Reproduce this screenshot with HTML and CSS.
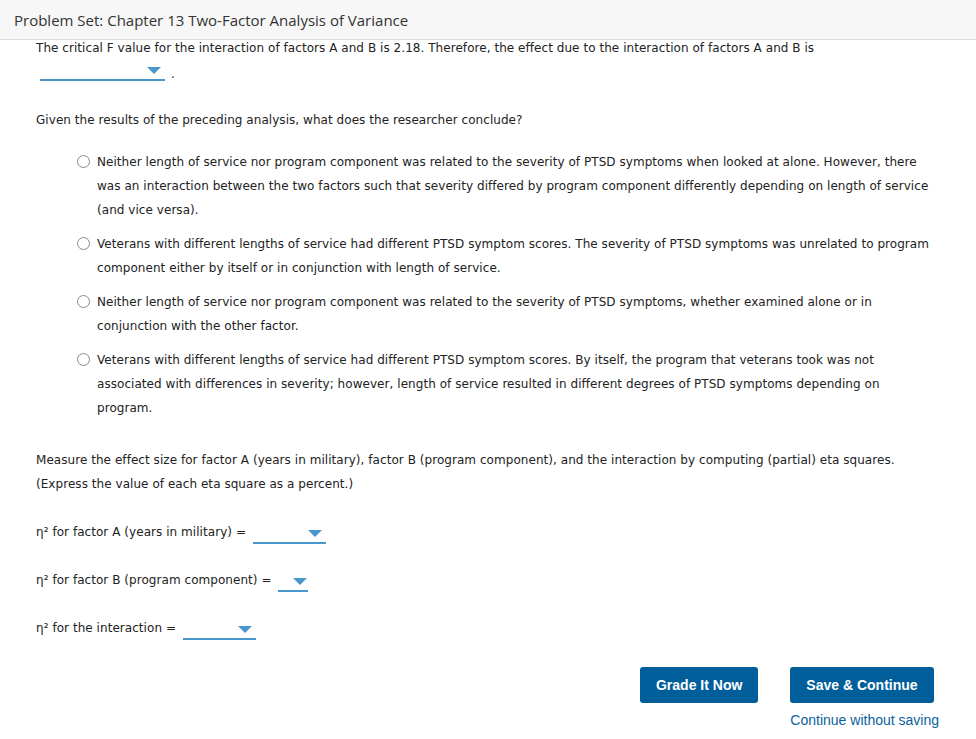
FILE: index.html
```html
<!DOCTYPE html>
<html lang="en">
<head>
  <meta charset="UTF-8" />
  <title>Problem Set: Chapter 13</title>
  <link rel="stylesheet" href="styles.css">
</head>
<body>

<div class="top-bar">
  <h1>Problem Set: Chapter 13 Two-Factor Analysis of Variance</h1>
</div>

<div class="content">
  <p class="line">The critical F value for the interaction of factors A and B is 2.18. Therefore, the effect due to the interaction of factors A and B is</p>
  <p class="drop-line"><span class="drop wide"></span> .</p>

  <p class="question">Given the results of the preceding analysis, what does the researcher conclude?</p>

  <div class="options">
    <label class="option">
      <span class="radio"></span>
      <span class="option-text">Neither length of service nor program component was related to the severity of PTSD symptoms when looked at alone. However, there was an interaction between the two factors such that severity differed by program component differently depending on length of service (and vice versa).</span>
    </label>
    <label class="option">
      <span class="radio"></span>
      <span class="option-text">Veterans with different lengths of service had different PTSD symptom scores. The severity of PTSD symptoms was unrelated to program component either by itself or in conjunction with length of service.</span>
    </label>
    <label class="option">
      <span class="radio"></span>
      <span class="option-text">Neither length of service nor program component was related to the severity of PTSD symptoms, whether examined alone or in conjunction with the other factor.</span>
    </label>
    <label class="option">
      <span class="radio"></span>
      <span class="option-text">Veterans with different lengths of service had different PTSD symptom scores. By itself, the program that veterans took was not associated with differences in severity; however, length of service resulted in different degrees of PTSD symptoms depending on program.</span>
    </label>
  </div>

  <p class="measure">Measure the effect size for factor A (years in military), factor B (program component), and the interaction by computing (partial) eta squares.<br>(Express the value of each eta square as a percent.)</p>

  <div class="eta-list">
    <div class="eta">η² for factor A (years in military) = <span class="drop mid"></span></div>
    <div class="eta">η² for factor B (program component) = <span class="drop small"></span></div>
    <div class="eta">η² for the interaction = <span class="drop mid"></span></div>
  </div>

  <div class="actions">
    <button class="btn">Grade It Now</button>
    <div class="save-col">
      <button class="btn">Save &amp; Continue</button>
      <a class="skip" href="#">Continue without saving</a>
    </div>
  </div>
</div>

</body>
</html>
```

FILE: styles.css
```css
body {
  margin: 0;
  font-family: 'DejaVu Sans', sans-serif;
  font-size: 12px;
  letter-spacing: 0.05px;
  color: #222;
  background: #fff;
}

.top-bar {
  height: 39px;
  background: #f7f7f7;
  border-bottom: 1px solid #dcdcdc;
  display: flex;
  align-items: center;
  padding: 0 14px;
}

.top-bar h1 {
  margin: 0;
  font-family: 'Open Sans', sans-serif;
  font-size: 15px;
  font-weight: 400;
  letter-spacing: 0;
  color: #333;
}

.content {
  padding: 0 36px;
}

.line {
  margin: 0;
  line-height: 16px;
}

.drop-line {
  margin: 3px 0 0 4px;
  height: 22px;
  display: flex;
  align-items: flex-end;
}

.drop {
  display: inline-block;
  position: relative;
  height: 20px;
  border-bottom: 2px solid #4a95cc;
  vertical-align: bottom;
}

.drop::after {
  content: "";
  position: absolute;
  right: 4px;
  top: 8px;
  border-left: 7px solid transparent;
  border-right: 7px solid transparent;
  border-top: 7px solid #4a95cc;
}

.drop.wide { width: 125px; margin-right: 6px; }
.drop.mid { width: 73px; }
.drop.small { width: 30px; }
.drop.small::after { right: 1px; }

.question {
  margin: 31px 0 0;
  line-height: 16px;
}

.options {
  margin-top: 22px;
  padding-left: 41px;
  padding-right: 8px;
  display: flex;
  flex-direction: column;
  gap: 10px;
}

.option {
  display: flex;
  gap: 7px;
  line-height: 24px;
}

.radio {
  flex-shrink: 0;
  width: 11px;
  height: 11px;
  margin-top: 5px;
  border: 1px solid #8a8a8a;
  border-radius: 50%;
  background: #fff;
}

.option-text {
  flex: 1;
}

.measure {
  margin: 28px 0 0;
  line-height: 24px;
}

.eta-list {
  margin-top: 25px;
  display: flex;
  flex-direction: column;
  gap: 26px;
}

.eta {
  height: 22px;
  display: flex;
  align-items: center;
  white-space: pre;
}

.eta .drop {
  margin-left: 3px;
  margin-top: 2px;
}

.actions {
  margin-top: 28px;
  display: flex;
  justify-content: flex-end;
  gap: 32px;
  padding-right: 1px;
}

.save-col {
  display: flex;
  flex-direction: column;
  align-items: flex-start;
  gap: 9px;
}

.btn {
  height: 36px;
  padding: 0 16px;
  background: #005e9b;
  color: #fff;
  border: none;
  border-radius: 3px;
  font-family: 'Liberation Sans', Arial, sans-serif;
  font-weight: 700;
  font-size: 14px;
  letter-spacing: 0;
  cursor: pointer;
}

.skip {
  font-family: 'Liberation Sans', Arial, sans-serif;
  font-size: 14px;
  letter-spacing: 0;
  color: #0b5f9c;
  text-decoration: none;
}
```
